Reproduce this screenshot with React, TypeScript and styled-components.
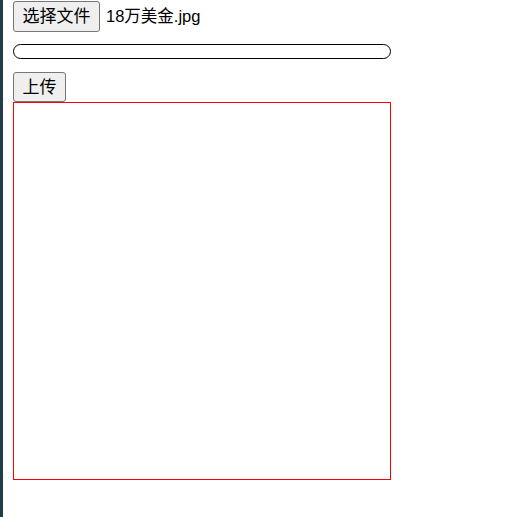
import * as React from 'react';
import styled, { createGlobalStyle } from 'styled-components';

const GlobalStyle = createGlobalStyle`
  html, body {
    margin: 0;
    padding: 0;
    background: #fff;
  }
  body {
    font-family: "Liberation Sans", "Noto Sans CJK SC", sans-serif;
    color: #000;
  }
`;

const Page = styled.div`
  display: flex;
  min-height: 517px;
`;

const Edge = styled.div`
  width: 3px;
  flex-shrink: 0;
  background: #1f3e48;
`;

const Main = styled.div`
  display: flex;
  flex-direction: column;
  align-items: flex-start;
  padding: 1px 0 0 10px;
`;

const FileRow = styled.div`
  display: flex;
  align-items: center;
  gap: 6px;
`;

const Button = styled.button<{ $w: number; $h: number }>`
  box-sizing: border-box;
  width: ${p => p.$w}px;
  height: ${p => p.$h}px;
  padding: 0;
  background: #efefef;
  border: 1px solid #767676;
  border-radius: 3px;
  font-family: "Liberation Sans", "Noto Sans CJK SC", sans-serif;
  font-size: 17px;
  line-height: 1;
  color: #000;
  cursor: pointer;
`;

const FileName = styled.span`
  font-size: 16.5px;
  line-height: 1;
`;

const Progress = styled.div`
  box-sizing: border-box;
  width: 378px;
  height: 15px;
  margin-top: 12px;
  border: 1px solid #000;
  border-radius: 8px;
  background: #fff;
`;

const UploadRow = styled.div`
  margin-top: 13px;
`;

const Preview = styled.div`
  box-sizing: border-box;
  width: 378px;
  height: 378px;
  border: 1px solid #f00;
`;

export default function App() {
  return (
    <>
      <GlobalStyle />
      <Page>
        <Edge />
        <Main>
          <FileRow>
            <Button $w={87} $h={31}>选择文件</Button>
            <FileName>18万美金.jpg</FileName>
          </FileRow>
          <Progress />
          <UploadRow>
            <Button $w={53} $h={30}>上传</Button>
          </UploadRow>
          <Preview />
        </Main>
      </Page>
    </>
  );
}
